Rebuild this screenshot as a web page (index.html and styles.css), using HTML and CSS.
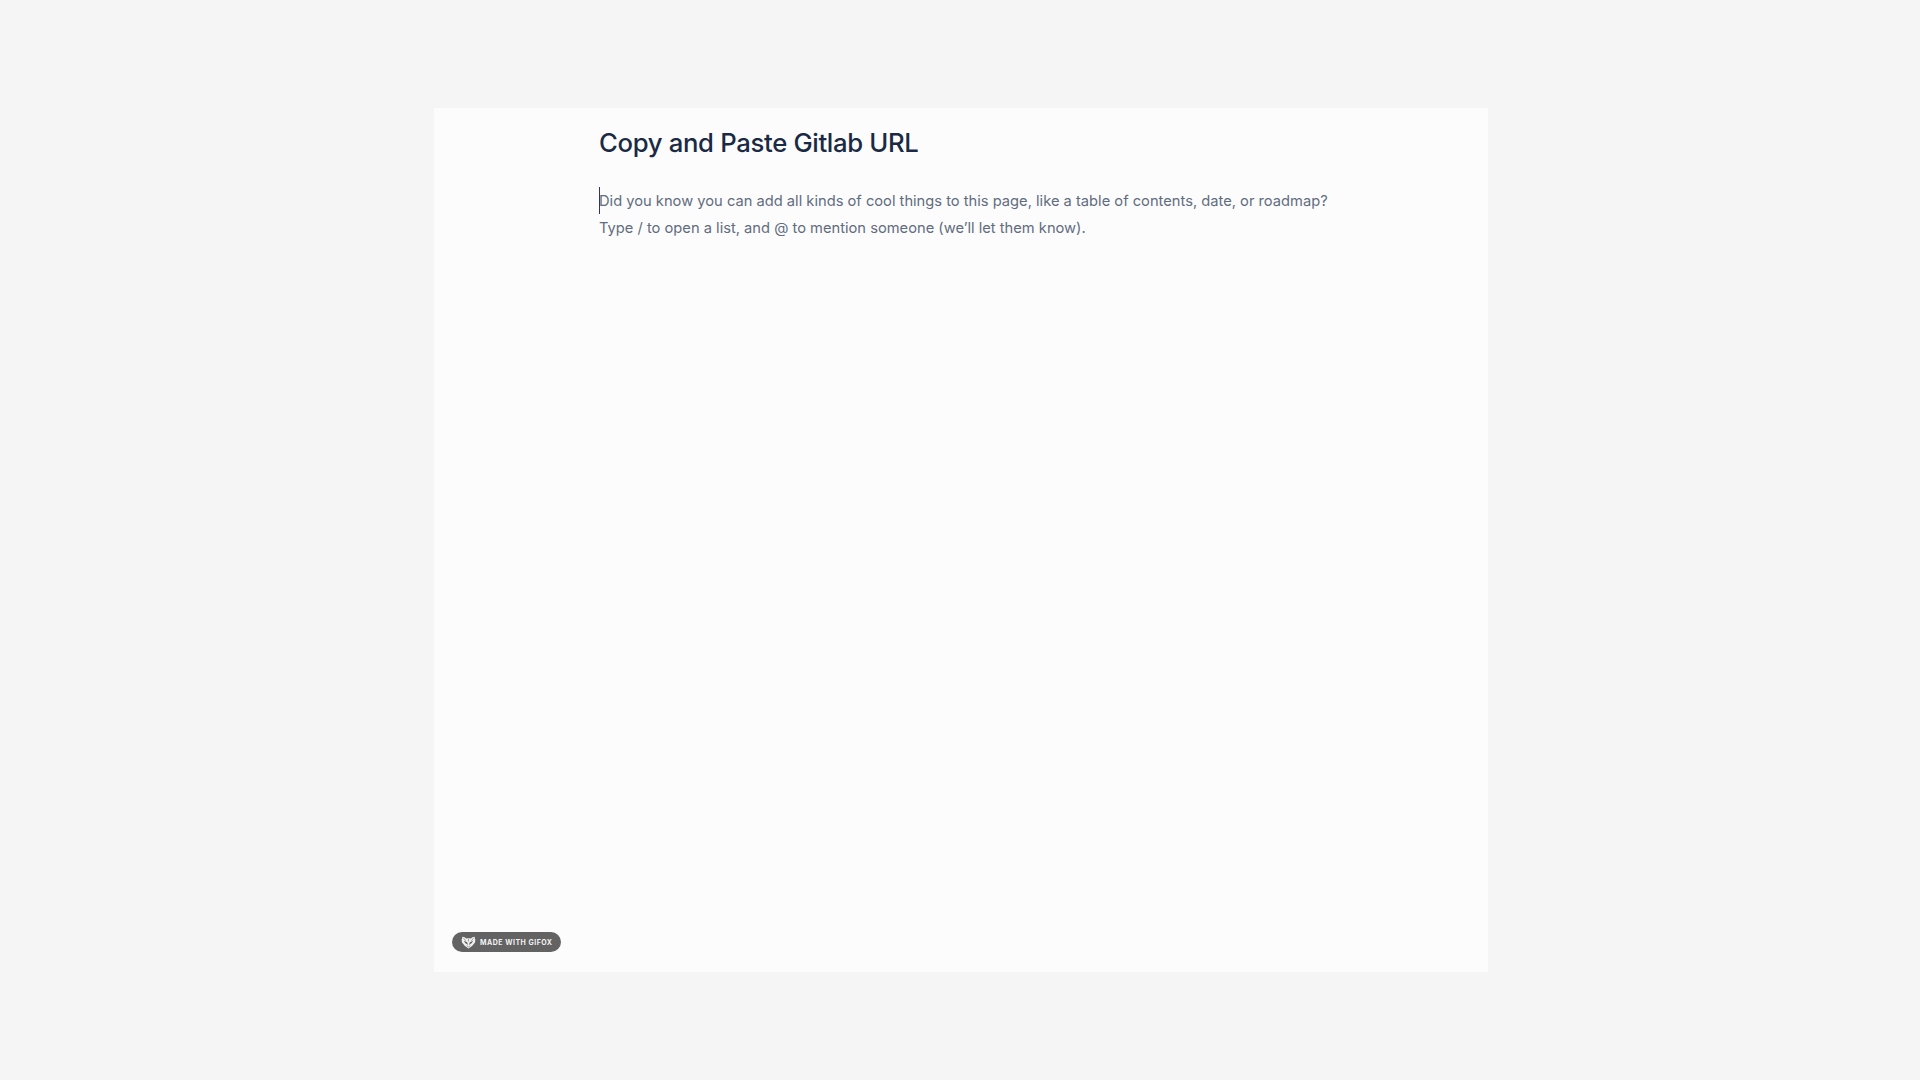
FILE: index.html
```html
<!DOCTYPE html>
<html lang="en">
<head>
    <meta charset="UTF-8">
    <meta name="viewport" content="width=device-width, initial-scale=1.0">
    <title>Copy and Paste Gitlab URL</title>
    <link rel="stylesheet" href="styles.css">
</head>
<body>
    <div class="frame">
        <div class="page">
            <h1>Copy and Paste Gitlab URL</h1>
            <p class="hint"><span class="caret"></span>Did you know you can add all kinds of cool things to this page, like a table of contents, date, or roadmap?<br>Type / to open a list, and @ to mention someone (we’ll let them know).</p>
        </div>
        <div class="badge">
            <svg class="fox" viewBox="0 0 16 14" width="15" height="13">
                <path d="M1.5 .8 Q4 .8 5.5 2.6 Q8 1.8 10.5 2.6 Q12 .8 14.5 .8 Q15.8 4 15 7 Q12.5 11 8 13.4 Q3.5 11 1 7 Q.2 4 1.5 .8 Z" fill="#f0f0f0"/>
                <path d="M3 5 L6.6 6.8 L7.4 9.6 L4.4 7.6 Z M13 5 L9.4 6.8 L8.6 9.6 L11.6 7.6 Z" fill="#636363"/>
                <path d="M8 2.6 L8 6 M2.6 2.4 L5 5.2 M13.4 2.4 L11 5.2 M6 10.6 L8 11.6 L10 10.6" stroke="#636363" stroke-width="0.6" fill="none"/>
            </svg>
            <span>MADE WITH GIFOX</span>
        </div>
    </div>
</body>
</html>
```
FILE: styles.css
```css
body {
    margin: 0;
    height: 1080px;
    overflow: hidden;
    background-color: #f5f5f5;
    font-family: Inter, "Liberation Sans", sans-serif;
}
.frame {
    position: relative;
    box-sizing: border-box;
    width: 1054px;
    height: 864px;
    margin: 108px 0 0 434px;
    background-color: #fcfcfc;
}
.page {
    padding: 17px 0 0 165px;
}
h1 {
    margin: 0;
    color: #1a2a44;
    font-size: 25.7px;
    font-weight: 450;
    line-height: 36px;
    letter-spacing: -0.33px;
}
.hint {
    position: relative;
    margin: 27px 0 0;
    color: #626c7f;
    font-size: 14.7px;
    line-height: 27px;
}
.caret {
    position: absolute;
    left: 0;
    top: -1px;
    width: 1px;
    height: 27px;
    background-color: #2c3a55;
}
.badge {
    position: absolute;
    left: 18px;
    bottom: 20px;
    display: flex;
    align-items: center;
    gap: 4px;
    width: 109px;
    height: 20px;
    box-sizing: border-box;
    padding-left: 9px;
    border-radius: 10px;
    background-color: #636363;
    color: #f2f2f2;
    font-size: 7px;
    font-weight: 700;
    letter-spacing: 0.5px;
}
```
